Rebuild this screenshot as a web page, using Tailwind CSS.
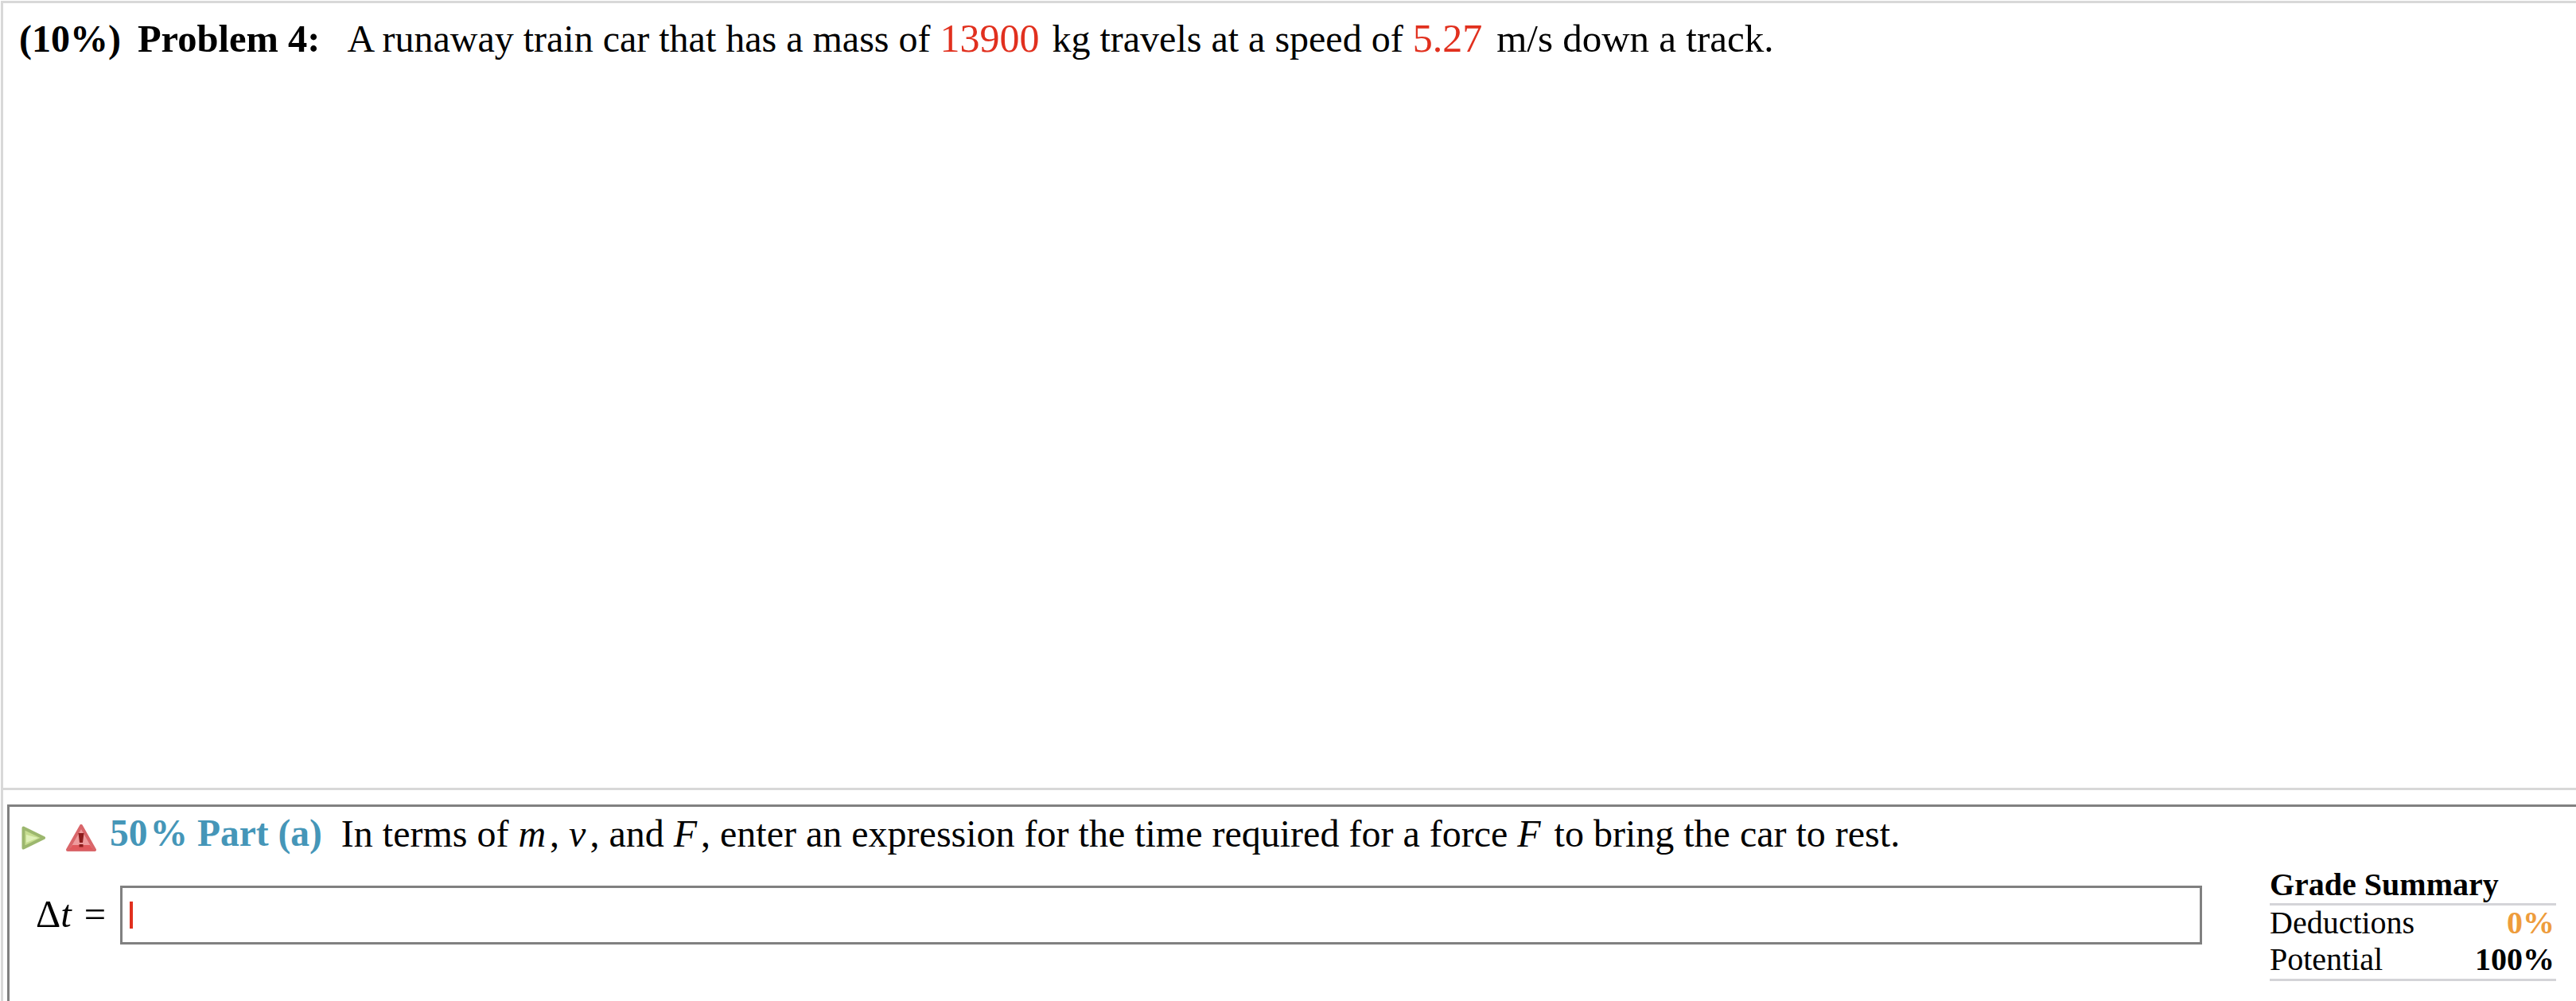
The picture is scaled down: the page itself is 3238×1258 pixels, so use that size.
<!DOCTYPE html>
<html lang="en">
<head>
    <meta charset="UTF-8">
    <title>Problem 4</title>
    <script src="https://cdn.jsdelivr.net/npm/@tailwindcss/browser@4"></script>
</head>
<body class="h-[1258px] overflow-hidden bg-white text-black font-['Liberation_Serif',serif] text-[48px]">
    <div class="ml-px mt-px h-[1257px] border-l-[3px] border-t-[3px] border-[#d8d8d8]">
        <!-- problem statement -->
        <div class="h-[989px] border-b-[3px] border-[#d8d8d8] pl-[20px] pt-[17px] leading-[54px] whitespace-nowrap">
            <span class="font-bold">(10%)</span>
            <span class="font-bold ml-[9px] text-[48.5px]">Problem 4:</span>
            <span class="ml-[22px]">A runaway train car that has a mass of <span class="text-[#e1301e] text-[50px]">13900</span> <span class="ml-[4px]">kg</span> travels at a speed of <span class="text-[#e1301e] text-[50px]">5.27</span> <span class="ml-[6px] text-[49px]">m/s down a track.</span></span>
        </div>

        <!-- part a -->
        <div class="ml-[5px] mt-[18px] h-[300px] border-l-[3px] border-t-[3px] border-[#808080]">
            <div class="flex items-center h-[78px] pl-[15px] whitespace-nowrap">
                <svg class="w-[30px] h-[30px] shrink-0 blur-[0.6px]" viewBox="0 0 30 30">
                    <path d="M2.5 2.5 L28 15 L2.5 27.5 Z" fill="#c6dd90" stroke="#9cb76e" stroke-width="4" stroke-linejoin="round"/>
                    <path d="M6 11 L21 15 L6 21 Z" fill="#dff0b8"/>
                </svg>
                <svg class="w-[38px] h-[37px] shrink-0 ml-[26px] mt-[1px] blur-[0.6px]" viewBox="0 0 38 37">
                    <path d="M19 3 L36 33 L2 33 Z" fill="#ee9a9c" stroke="#d9666a" stroke-width="4" stroke-linejoin="round"/>
                    <path d="M4 33 L34 33 L30 27 L8 27 Z" fill="#e0585c"/>
                    <path d="M15.5 12 L22.5 12 L21 24 L17 24 Z" fill="#8c1c1c"/>
                    <rect x="16.5" y="26" width="5" height="3.5" fill="#8c1c1c"/>
                </svg>
                <span class="font-bold text-[#4596b8] ml-[17px] mb-[10px] text-[47.5px]">50<span class="ml-[3px]">%</span> Part (a)</span>
                <span class="ml-[24px] mb-[10px]">In terms of <i>m</i><span class="ml-[5px]">,</span> <i>v</i><span class="ml-[5px]">,</span> and <i>F</i><span class="ml-[5px]">,</span> enter an expression for the time required for a force <i>F</i> <span class="ml-[5px]">to</span> bring the car to rest.</span>
            </div>
            <div class="flex items-start">
                <div class="flex items-center pl-[33px] mt-[21px]">
                    <span class="w-[106px] mb-[2px] whitespace-nowrap text-[48.5px]">Δ<i>t</i><span class="ml-[16px]">=</span></span>
                    <div class="flex items-center w-[2617px] h-[74px] border-[3px] border-[#808080] pl-[9px]">
                        <div class="w-[4px] h-[34px] bg-[#e1301e]"></div>
                    </div>
                </div>
                <div class="ml-[85px] w-[360px] text-[40px] leading-[44px]">
                    <div class="font-bold border-b-[3px] border-[#d4d4d8] h-[46px] leading-[40px]">Grade Summary</div>
                    <div class="flex justify-between pr-[2px] h-[46px]"><span>Deductions</span><span class="font-bold text-[#ee9c3c]">0%</span></div>
                    <div class="flex justify-between pr-[2px] border-b-[3px] border-[#d4d4d8] h-[49px]"><span>Potential</span><span class="font-bold">100%</span></div>
                </div>
            </div>
        </div>
    </div>
</body>
</html>
